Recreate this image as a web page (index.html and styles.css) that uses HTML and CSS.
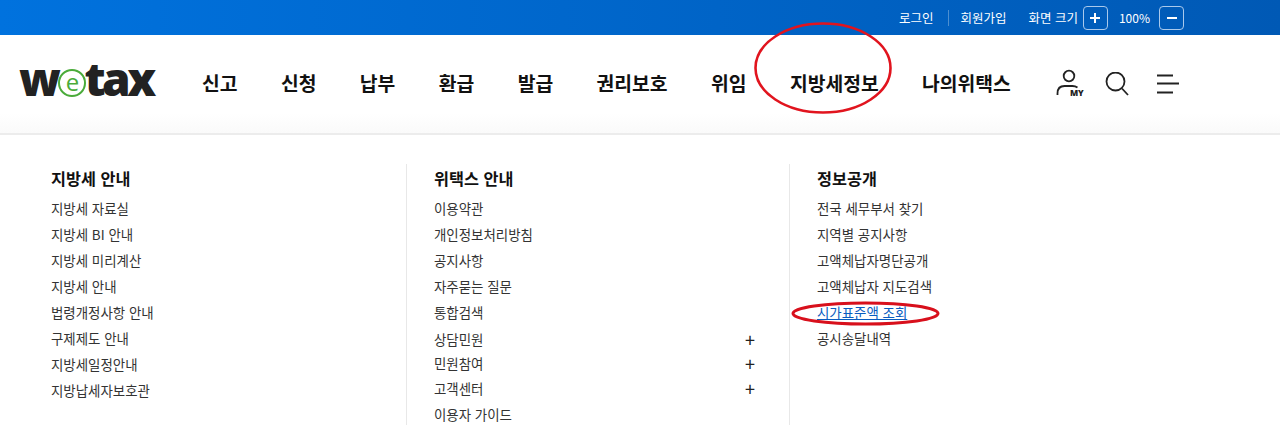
FILE: index.html
```html
<!DOCTYPE html>
<html lang="ko">
<head>
<meta charset="utf-8">
<title>위택스</title>
<link rel="stylesheet" href="styles.css">
</head>
<body>
<div class="page">
  <div class="topbar">
    <a class="top-link">로그인</a>
    <span class="top-sep"></span>
    <a class="top-link">회원가입</a>
    <span class="zoom-label">화면 크기</span>
    <span class="zoom-btn zoom-plus"><svg width="12" height="12" viewBox="0 0 12 12"><path d="M6 1v10M1 6h10" stroke="#fff" stroke-width="2"/></svg></span>
    <span class="zoom-val">100%</span>
    <span class="zoom-btn"><svg width="12" height="12" viewBox="0 0 12 12"><path d="M1 6h10" stroke="#fff" stroke-width="2"/></svg></span>
  </div>
  <header class="header">
    <div class="logo">w<span class="logo-e">e</span>tax</div>
    <nav class="nav">
      <a>신고</a><a>신청</a><a>납부</a><a>환급</a><a>발급</a><a>권리보호</a><a>위임</a><a>지방세정보</a><a>나의위택스</a>
    </nav>
    <div class="tools">
      <span class="tool-my">
        <svg width="30" height="30" viewBox="0 0 30 30"><circle cx="14" cy="7" r="5.300" fill="none" stroke="#222" stroke-width="1.800"/><path d="M2.500 26v-1.500c0-5 2.500-7.500 7-7.500h8c2 0 3.500 .5 5 1.500" fill="none" stroke="#222" stroke-width="1.800"/></svg>
        <span class="my-text">MY</span>
      </span>
      <svg width="24" height="24" viewBox="0 0 24 24"><circle cx="10.500" cy="9.500" r="9" fill="none" stroke="#222" stroke-width="1.800"/><path d="M17 16.500l6 6.500" stroke="#222" stroke-width="1.800"/></svg>
      <svg class="tool-menu" width="23" height="21" viewBox="0 0 23 21"><path d="M0 1.500h16M0 9.500h22M0 18.500h16" stroke="#222" stroke-width="1.800"/></svg>
    </div>
  </header>
  <main class="menu">
    <section class="col">
      <h3>지방세 안내</h3>
      <ul>
        <li>지방세 자료실</li><li>지방세 BI 안내</li><li>지방세 미리계산</li><li>지방세 안내</li><li>법령개정사항 안내</li><li>구제제도 안내</li><li>지방세일정안내</li><li>지방납세자보호관</li>
      </ul>
    </section>
    <section class="col">
      <h3>위택스 안내</h3>
      <ul>
        <li>이용약관</li><li>개인정보처리방침</li><li>공지사항</li><li>자주묻는 질문</li><li class="last-plain">통합검색</li>
        <li class="more">상담민원<i>+</i></li><li class="more">민원참여<i>+</i></li><li class="more">고객센터<i>+</i></li>
        <li>이용자 가이드</li>
      </ul>
    </section>
    <section class="col">
      <h3>정보공개</h3>
      <ul>
        <li>전국 세무부서 찾기</li><li>지역별 공지사항</li><li>고액체납자명단공개</li><li>고액체납자 지도검색</li><li><a class="active">시가표준액 조회</a></li><li>공시송달내역</li>
      </ul>
    </section>
  </main>
  <svg class="marks" width="1280" height="448" viewBox="0 0 1280 448">
    <ellipse cx="823" cy="68" rx="67.500" ry="44.500" fill="none" stroke="#e1141e" stroke-width="2.600"/>
    <ellipse cx="865.500" cy="313.500" rx="72.500" ry="10.500" fill="none" stroke="#d8101c" stroke-width="3"/>
  </svg>
</div>
</body>
</html>
```
FILE: styles.css
```css
* { box-sizing: border-box; }
html, body { margin: 0; padding: 0; background: #fff; }
body { font-family: "Noto Sans CJK KR", "Noto Sans", sans-serif; color: #222; }
.page { position: relative; width: 1280px; height: 448px; overflow: hidden; }
.topbar { height: 35px; background: linear-gradient(90deg, #0072de, #0059b5); display: flex; align-items: center; justify-content: flex-end; padding-right: 96px; color: #fff; font-size: 12.500px; }
.top-sep { width: 1px; height: 16px; background: #4d8fd0; margin: 0 11px 0 15px; }
.zoom-label { margin-left: 22px; }
.zoom-btn { width: 25px; height: 24px; border: 1px solid #a9c9ec; border-radius: 4px; display: flex; align-items: center; justify-content: center; margin-left: 6px; }
.zoom-plus { margin-left: 5px; }
.zoom-val { margin-left: 11px; margin-right: 3px; font-size: 12px; }
.header { height: 100px; border-bottom: 2px solid #ececec; background: linear-gradient(180deg, #fff 80%, #fafafa); display: flex; align-items: center; padding-left: 20px; }
.logo { width: 183px; margin-left: -1px; white-space: nowrap; font-family: "Open Sans", "Liberation Sans", sans-serif; font-weight: 800; font-size: 46px; line-height: 50px; letter-spacing: -3.500px; color: #222; padding-bottom: 12px; }
.logo-e { display: inline-block; vertical-align: 5px; width: 28px; height: 28px; border: 2px solid #4aab3a; border-radius: 50%; font-size: 24px; line-height: 21px; font-weight: 400; color: #4aab3a; text-align: center; letter-spacing: 0; margin: 0 -2px 0 1px; }
.nav { display: flex; gap: 43.450px; font-size: 19.300px; font-weight: 700; color: #111; padding-bottom: 3px; }
.tools { display: flex; align-items: center; gap: 21px; margin-left: 44px; }
.tool-my { position: relative; display: block; width: 29px; height: 30px; }
.tool-menu { margin-left: 7px; }
.my-text { position: absolute; right: 0; bottom: 2px; font: 800 8.500px/9px "Open Sans", sans-serif; color: #222; }
.menu { height: 290px; display: grid; grid-template-columns: repeat(3, 383px); padding: 29px 0 0 24px; }
.col { height: 261px; padding-left: 27px; padding-right: 34px; overflow: hidden; border-right: 1px solid #e8e8e8; }
.col:last-child { border-right: 0; }
.col h3 { margin: 0; font-size: 16.300px; line-height: 28px; font-weight: 700; color: #111; }
.col ul { list-style: none; margin: 3px 0 0; padding: 0; }
.col li { height: 26px; line-height: 26px; font-size: 13.450px; color: #333; }
.col li.last-plain { margin-bottom: 1.500px; }
.col li.more { height: 24.700px; line-height: 24.700px; display: flex; justify-content: space-between; }
.col li.more i { font-style: normal; font-size: 18px; font-weight: 400; color: #222; }
.active { color: #0a5cc0; text-decoration: underline; }
.marks { position: absolute; left: 0; top: 0; pointer-events: none; }
```
